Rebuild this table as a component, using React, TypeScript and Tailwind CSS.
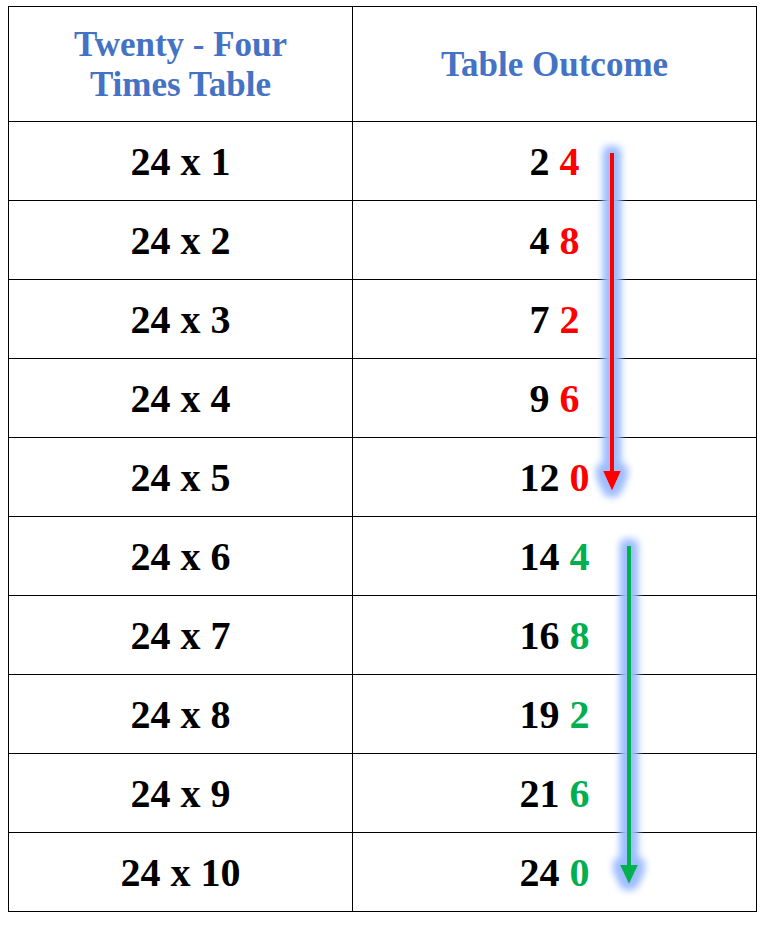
import React from "react";

type Row = { label: string; head: string; tail: string; color: "red" | "green" };

const rows: Row[] = [
  { label: "24 x 1", head: "2", tail: "4", color: "red" },
  { label: "24 x 2", head: "4", tail: "8", color: "red" },
  { label: "24 x 3", head: "7", tail: "2", color: "red" },
  { label: "24 x 4", head: "9", tail: "6", color: "red" },
  { label: "24 x 5", head: "12", tail: "0", color: "red" },
  { label: "24 x 6", head: "14", tail: "4", color: "green" },
  { label: "24 x 7", head: "16", tail: "8", color: "green" },
  { label: "24 x 8", head: "19", tail: "2", color: "green" },
  { label: "24 x 9", head: "21", tail: "6", color: "green" },
  { label: "24 x 10", head: "24", tail: "0", color: "green" },
];

const tailColor = {
  red: "text-[#ff0000]",
  green: "text-[#00b050]",
};

function Arrows() {
  return (
    <svg
      className="pointer-events-none absolute left-0 top-0"
      width={768}
      height={927}
      viewBox="0 0 768 927"
    >
      <defs>
        <filter id="glow" x="-300%" y="-10%" width="700%" height="120%">
          <feMorphology in="SourceAlpha" operator="dilate" radius="5" result="d" />
          <feGaussianBlur in="d" stdDeviation="4" result="b" />
          <feFlood floodColor="#9dbdff" floodOpacity="1" />
          <feComposite in2="b" operator="in" result="g" />
          <feMerge>
            <feMergeNode in="g" />
            <feMergeNode in="g" />
            <feMergeNode in="SourceGraphic" />
          </feMerge>
        </filter>
      </defs>
      <g filter="url(#glow)">
        <line x1={612} y1={153} x2={612} y2={474} stroke="#ff0000" strokeWidth={4} />
        <polygon points="603,471 621,471 612,491" fill="#ff0000" />
      </g>
      <g filter="url(#glow)">
        <line x1={629} y1={546} x2={629} y2={868} stroke="#00b050" strokeWidth={4} />
        <polygon points="620,865 638,865 629,884" fill="#00b050" />
      </g>
    </svg>
  );
}

export default function App() {
  return (
    <div className="relative h-[927px] w-[768px] bg-white font-['Liberation_Serif',serif] font-bold">
      <div className="ml-[8px] pt-[6px]">
        <div className="grid w-[749px] grid-cols-[344px_404px] border-l border-t border-black">
          <div className="flex h-[115px] flex-col items-center justify-center border-b border-r border-black pt-[2px] text-[35px] leading-[40px] text-[#4472c4]">
            <span>Twenty - Four</span>
            <span>Times Table</span>
          </div>
          <div className="flex h-[115px] items-center justify-center border-b border-r border-black pt-[2px] text-[35px] leading-[40px] text-[#4472c4]">
            Table Outcome
          </div>
          {rows.map((r) => (
            <React.Fragment key={r.label}>
              <div className="flex h-[79px] items-center justify-center border-b border-r border-black pt-[2px] text-[40px] text-black">
                {r.label}
              </div>
              <div className="flex h-[79px] items-center justify-center border-b border-r border-black pt-[2px] text-[40px] text-black">
                <span>
                  {r.head} <span className={tailColor[r.color]}>{r.tail}</span>
                </span>
              </div>
            </React.Fragment>
          ))}
        </div>
      </div>
      <Arrows />
    </div>
  );
}
